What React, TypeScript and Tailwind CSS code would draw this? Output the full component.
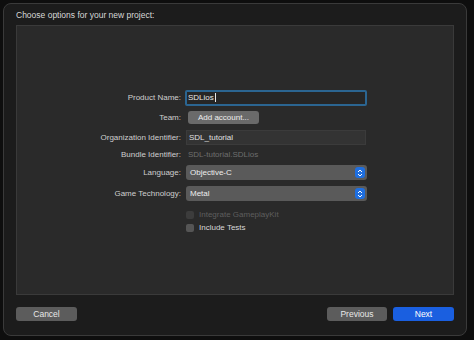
import React from "react";

function Stepper() {
  return (
    <span className="flex h-[11px] w-[10px] items-center justify-center rounded-[3px] bg-[#1f6fe0]">
      <svg width="6" height="8" viewBox="0 0 6 8" fill="none">
        <path d="M1 3 L3 1 L5 3" stroke="white" strokeWidth="1" />
        <path d="M1 5 L3 7 L5 5" stroke="white" strokeWidth="1" />
      </svg>
    </span>
  );
}

function Row({ label, children, h = "h-[17px]" }: { label: string; children: React.ReactNode; h?: string }) {
  return (
    <div className={`flex items-center ${h}`}>
      <div className="w-[167px] pr-[3px] text-right text-[#cfcfcf]">{label}</div>
      <div className="flex flex-1 items-center">{children}</div>
    </div>
  );
}

export default function App() {
  return (
    <div
      className="h-[340px] w-[474px] bg-[#0e0e0e] p-[3px] pr-[7px] pb-[4px]"
      style={{ fontFamily: "'Liberation Sans', Arial, sans-serif" }}
    >
      <div className="flex h-full flex-col rounded-[8px] border border-[#3a3a3a] bg-[#1c1c1c] px-[12px]">
        <div className="pt-[6px] pb-[5px] text-[8.5px] leading-[10px] text-[#d8d8d8]">
          Choose options for your new project:
        </div>
        <div className="flex h-[270px] flex-col border border-[#3a3a3a] bg-[#2a2a2a] pt-[63px] text-[8px] leading-[10px]">
          <Row label="Product Name:">
            <div className="ml-[1px] flex h-[16px] w-[182px] items-center rounded-[2px] border-[2px] border-[#2b6591] bg-[#262626] pl-[1px] text-[#e8e8e8]">
              SDLios<span className="ml-[1px] h-[9px] w-px bg-[#e8e8e8]" />
            </div>
          </Row>
          <Row label="Team:" h="h-[23px]">
            <div className="ml-[4px] flex h-[13px] w-[71px] items-center justify-center rounded-[3px] bg-[#6a6a6a] text-[#eeeeee]">
              Add account...
            </div>
          </Row>
          <Row label="Organization Identifier:">
            <div className="ml-[2px] flex h-[15px] w-[180px] items-center border border-[#3b3b3b] bg-[#333333] pl-[2px] text-[#e0e0e0]">
              SDL_tutorial
            </div>
          </Row>
          <Row label="Bundle Identifier:">
            <div className="ml-[4px] text-[#6e6e6e]">SDL-tutorial.SDLios</div>
          </Row>
          <Row label="Language:" h="h-[19px]">
            <div className="ml-[2px] flex h-[15px] w-[181px] items-center justify-between rounded-[3px] bg-[#5a5a5a] pl-[4px] pr-[2px] text-[#eeeeee]">
              <span>Objective-C</span>
              <Stepper />
            </div>
          </Row>
          <Row label="Game Technology:" h="h-[23px]">
            <div className="ml-[2px] flex h-[15px] w-[181px] items-center justify-between rounded-[3px] bg-[#5a5a5a] pl-[4px] pr-[2px] text-[#eeeeee]">
              <span>Metal</span>
              <Stepper />
            </div>
          </Row>
          <div className="mt-[3px] flex h-[13px] items-center pl-[169px]">
            <span className="h-[8px] w-[8px] rounded-[2px] bg-[#3c3c3c]" />
            <span className="ml-[5px] text-[#5e5e5e]">Integrate GameplayKit</span>
          </div>
          <div className="flex h-[13px] items-center pl-[169px]">
            <span className="h-[8px] w-[8px] rounded-[2px] bg-[#555555]" />
            <span className="ml-[5px] text-[#d8d8d8]">Include Tests</span>
          </div>
        </div>
        <div className="mt-[12px] flex items-center text-[8.5px] leading-[10px]">
          <div className="flex h-[14px] w-[61px] items-center justify-center rounded-[3px] bg-[#5c5c5c] text-[#e8e8e8]">
            Cancel
          </div>
          <div className="flex-1" />
          <div className="flex h-[14px] w-[60px] items-center justify-center rounded-[3px] bg-[#5c5c5c] text-[#e8e8e8]">
            Previous
          </div>
          <div className="ml-[6px] flex h-[14px] w-[61px] items-center justify-center rounded-[3px] bg-[#1a5fe0] text-[#ffffff]">
            Next
          </div>
        </div>
      </div>
    </div>
  );
}
